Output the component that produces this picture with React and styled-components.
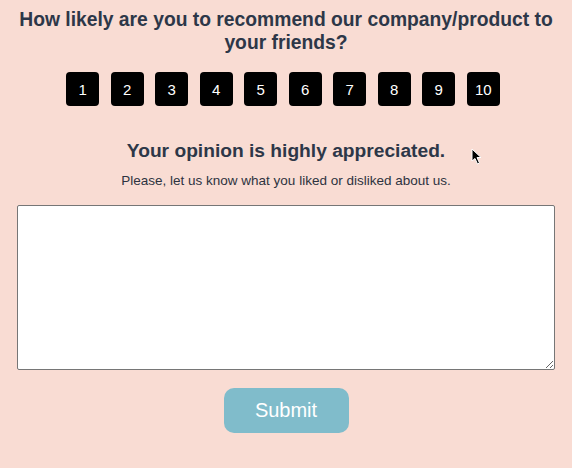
import React from "react";
import styled, { createGlobalStyle } from "styled-components";

const GlobalStyle = createGlobalStyle`
  html, body {
    margin: 0;
    padding: 0;
    background: #f9dcd3;
  }
  body {
    font-family: "Liberation Sans", Arial, sans-serif;
  }
`;

const Page = styled.div`
  position: relative;
  width: 572px;
  height: 468px;
  box-sizing: border-box;
  padding: 8px 17px 0;
  display: flex;
  flex-direction: column;
  align-items: center;
`;

const Question = styled.h1`
  margin: 0;
  font-size: 19.3px;
  line-height: 23px;
  font-weight: 700;
  color: #2d3748;
  text-align: center;
  white-space: nowrap;
`;

const Scale = styled.div`
  display: flex;
  gap: 11.5px;
  margin: 18px 6px 0 0;
`;

const ScoreButton = styled.button`
  width: 33px;
  height: 34px;
  padding: 0;
  border: none;
  border-radius: 4px;
  background: #000;
  color: #fff;
  font-family: "Liberation Sans", Arial, sans-serif;
  font-size: 15px;
  cursor: pointer;
`;

const Thanks = styled.h2`
  margin: 33px 0 0;
  font-size: 19.2px;
  line-height: 24px;
  font-weight: 700;
  color: #2d3748;
`;

const Hint = styled.p`
  margin: 10px 0 0;
  font-size: 13.5px;
  line-height: 16px;
  color: #2d3340;
`;

const Feedback = styled.textarea`
  box-sizing: border-box;
  width: 538px;
  height: 165px;
  margin-top: 16px;
  border: 1px solid #767676;
  border-radius: 2px;
  background: #fff;
  resize: vertical;
`;

const Submit = styled.button`
  margin-top: 18px;
  width: 125px;
  height: 45px;
  border: none;
  border-radius: 10px;
  background: #80bccb;
  color: #fff;
  font-family: "Liberation Sans", Arial, sans-serif;
  font-size: 20px;
  cursor: pointer;
`;

const Pointer = styled.svg`
  position: absolute;
  left: 471px;
  top: 148px;
`;

export default function App() {
  const scores = [1, 2, 3, 4, 5, 6, 7, 8, 9, 10];
  return (
    <>
      <GlobalStyle />
      <Page>
        <Question>
          How likely are you to recommend our company/product to
          <br />
          your friends?
        </Question>
        <Scale>
          {scores.map((n) => (
            <ScoreButton key={n}>{n}</ScoreButton>
          ))}
        </Scale>
        <Thanks>Your opinion is highly appreciated.</Thanks>
        <Hint>Please, let us know what you liked or disliked about us.</Hint>
        <Feedback />
        <Submit>Submit</Submit>
        <Pointer width="12" height="17" viewBox="0 0 12 17">
          <path
            d="M1 1 L1 13 L4 10.5 L6.5 16 L8.5 15 L6 9.5 L10 9.5 Z"
            fill="#000"
            stroke="#fff"
            strokeWidth="1"
            strokeLinejoin="round"
          />
        </Pointer>
      </Page>
    </>
  );
}
